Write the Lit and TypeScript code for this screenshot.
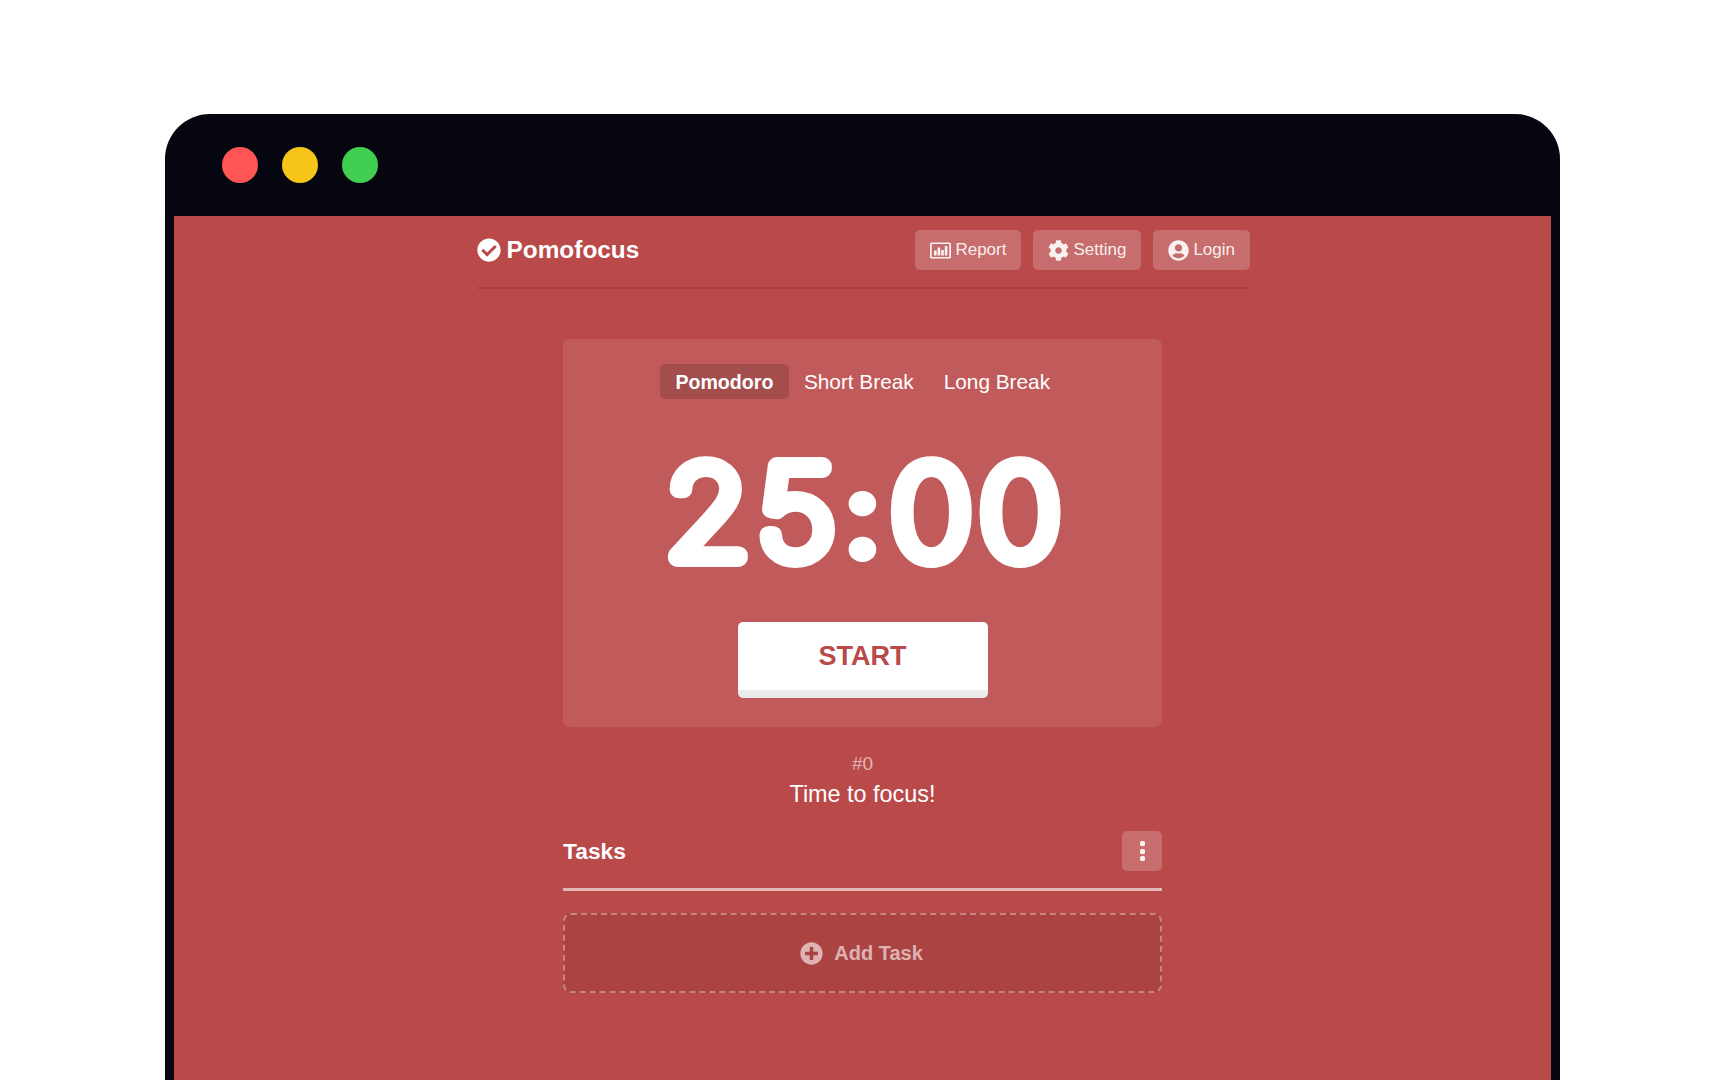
import { LitElement, html, css } from 'lit';
import { customElement } from 'lit/decorators.js';

const CHECK = 'M504 256c0 136.967-111.033 248-248 248S8 392.967 8 256 119.033 8 256 8s248 111.033 248 248zM227.314 387.314l184-184c6.248-6.248 6.248-16.379 0-22.627l-22.627-22.627c-6.248-6.249-16.379-6.249-22.628 0L216 308.118l-70.059-70.059c-6.248-6.248-16.379-6.248-22.628 0l-22.627 22.627c-6.248 6.248-6.248 16.379 0 22.627l104 104c6.249 6.25 16.379 6.25 22.628.001z';
const COG = 'M487.4 315.7l-42.6-24.6c4.3-23.2 4.3-47 0-70.2l42.6-24.6c4.9-2.8 7.1-8.6 5.5-14-11.1-35.6-30-67.8-54.7-94.6-3.8-4.1-10-5.1-14.8-2.3L380.8 110c-17.9-15.4-38.5-27.3-60.8-35.1V25.8c0-5.6-3.9-10.5-9.4-11.7-36.7-8.2-74.3-7.8-109.2 0-5.5 1.2-9.4 6.1-9.4 11.7V75c-22.2 7.9-42.8 19.8-60.8 35.1L88.7 85.5c-4.9-2.8-11-1.9-14.8 2.3-24.7 26.7-43.6 58.9-54.7 94.6-1.7 5.4.6 11.2 5.5 14L67.3 221c-4.3 23.2-4.3 47 0 70.2l-42.6 24.6c-4.9 2.8-7.1 8.6-5.5 14 11.1 35.6 30 67.8 54.7 94.6 3.8 4.1 10 5.1 14.8 2.3l42.6-24.6c17.9 15.4 38.5 27.3 60.8 35.1v49.2c0 5.6 3.9 10.5 9.4 11.7 36.7 8.2 74.3 7.8 109.2 0 5.5-1.2 9.4-6.1 9.4-11.7v-49.2c22.2-7.9 42.8-19.8 60.8-35.1l42.6 24.6c4.9 2.8 11 1.9 14.8-2.3 24.7-26.7 43.6-58.9 54.7-94.6 1.5-5.5-.7-11.3-5.6-14.1zM256 336c-44.1 0-80-35.9-80-80s35.9-80 80-80 80 35.9 80 80-35.9 80-80 80z';
const USER = 'M248 8C111 8 0 119 0 256s111 248 248 248 248-111 248-248S385 8 248 8zm0 96c48.6 0 88 39.4 88 88s-39.4 88-88 88-88-39.4-88-88 39.4-88 88-88zm0 344c-58.7 0-111.3-26.6-146.5-68.2 18.8-35.4 55.6-59.8 98.5-59.8 2.4 0 4.8.4 7.1 1.1 13 4.2 26.6 6.9 40.9 6.9 14.3 0 28-2.7 40.9-6.9 2.3-.7 4.7-1.1 7.1-1.1 42.9 0 79.7 24.4 98.5 59.8C359.3 421.4 306.7 448 248 448z';
const PLUS = 'M256 8C119 8 8 119 8 256s111 248 248 248 248-111 248-248S393 8 256 8zm144 276c0 6.6-5.4 12-12 12h-92v92c0 6.6-5.4 12-12 12h-56c-6.6 0-12-5.4-12-12v-92h-92c-6.6 0-12-5.4-12-12v-56c0-6.6 5.4-12 12-12h92v-92c0-6.6 5.4-12 12-12h56c6.6 0 12 5.4 12 12v92h92c6.6 0 12 5.4 12 12v56z';

@customElement('app-root')
export class AppRoot extends LitElement {
  static styles = css`
    :host {
      display: block;
      height: 1080px;
      overflow: hidden;
      background: #fff;
      padding: 114px 168px 0 165px;
      box-sizing: border-box;
      font-family: 'Liberation Sans', Arial, sans-serif;
      color: #fff;
    }

    .frame {
      height: 966px;
      padding: 0 9px;
      background: #05060f;
      border-radius: 45px 45px 0 0;
    }

    .titlebar {
      height: 102px;
      display: flex;
      align-items: center;
      gap: 24px;
      padding-left: 48px;
    }

    .dot {
      width: 36px;
      height: 36px;
      border-radius: 50%;
    }
    .red { background: #ff5555; }
    .yellow { background: #f7c517; }
    .green { background: #40cf50; }

    .page {
      height: 864px;
      background: #ba4949;
      display: flex;
      flex-direction: column;
      align-items: center;
    }

    nav {
      width: 773px;
      height: 73px;
      box-sizing: border-box;
      padding-top: 14px;
      margin-left: 1px;
      display: flex;
      justify-content: space-between;
      align-items: flex-start;
      border-bottom: 2px solid rgba(0, 0, 0, 0.1);
    }

    .logo {
      height: 40px;
      display: flex;
      align-items: center;
      gap: 6px;
      font-size: 24.4px;
      font-weight: 700;
    }
    .logo svg {
      width: 24px;
      height: 24px;
      fill: #fff;
    }

    .nav-buttons {
      display: flex;
      gap: 12px;
    }

    .nav-btn {
      height: 40px;
      display: flex;
      align-items: center;
      gap: 4px;
      padding: 0 14.5px 0 15.5px;
      border-radius: 5px;
      background: rgba(255, 255, 255, 0.2);
      font-size: 17px;
      color: rgba(255, 255, 255, 0.9);
    }
    .nav-btn svg {
      width: 21px;
      height: 21px;
      fill: rgba(255, 255, 255, 0.9);
    }

    .card {
      width: 599px;
      height: 388px;
      box-sizing: border-box;
      margin-top: 50px;
      padding-top: 25px;
      background: rgba(255, 255, 255, 0.1);
      border-radius: 7px;
      display: flex;
      flex-direction: column;
      align-items: center;
    }

    .tabs {
      display: flex;
      align-items: center;
      height: 35px;
    }
    .tab {
      height: 35px;
      line-height: 35px;
      padding: 0 15px;
      font-size: 20.8px;
    }
    .tab.active {
      padding: 0 15.5px;
      font-size: 19.6px;
      font-weight: 700;
      border-radius: 5px;
      background: rgba(0, 0, 0, 0.15);
      line-height: 37px;
    }

    .time {
      width: 599px;
      height: 223px;
      display: block;
    }
    .time text {
      font-family: Inter, 'Liberation Sans', sans-serif;
      font-size: 126px;
      font-weight: 100;
      text-anchor: middle;
      fill: #fff;
      stroke: #fff;
      stroke-width: 18px;
      stroke-linejoin: round;
      stroke-linecap: round;
    }
    .time .colon {
      font-weight: 700;
      stroke-width: 4px;
    }

    .start {
      width: 250px;
      height: 76px;
      box-sizing: border-box;
      border-bottom: 8px solid #ebebeb;
      border-radius: 5px;
      background: #fff;
      color: #ba4949;
      font-size: 27px;
      font-weight: 700;
      padding-top: 1px;
      display: flex;
      align-items: center;
      justify-content: center;
    }

    .status {
      margin-top: 26px;
      text-align: center;
    }
    .count {
      height: 22px;
      line-height: 22px;
      font-size: 19px;
      color: rgba(255, 255, 255, 0.6);
    }
    .message {
      margin-top: 4px;
      height: 28px;
      line-height: 30px;
      font-size: 23.4px;
    }

    .tasks {
      width: 599px;
      margin-top: 24px;
    }
    .tasks-head {
      height: 40px;
      padding-bottom: 17px;
      display: flex;
      align-items: center;
      justify-content: space-between;
      border-bottom: 3px solid rgba(255, 255, 255, 0.6);
      font-size: 22.8px;
      font-weight: 700;
    }
    .menu {
      width: 40px;
      height: 40px;
      border-radius: 5px;
      background: rgba(255, 255, 255, 0.2);
      display: flex;
      flex-direction: column;
      align-items: center;
      justify-content: center;
      gap: 2.5px;
    }
    .menu span {
      width: 5px;
      height: 5px;
      border-radius: 1.5px;
      background: rgba(255, 255, 255, 0.9);
    }

    .add {
      height: 80px;
      box-sizing: border-box;
      margin-top: 22px;
      border: 2px dashed rgba(255, 255, 255, 0.35);
      border-radius: 8px;
      background: rgba(0, 0, 0, 0.08);
      display: flex;
      align-items: center;
      justify-content: center;
      gap: 11px;
      font-size: 20px;
      font-weight: 700;
      color: rgba(255, 255, 255, 0.6);
    }
    .add svg {
      width: 23px;
      height: 23px;
      margin-left: -2px;
      fill: rgba(255, 255, 255, 0.6);
    }
  `;

  render() {
    return html`
      <div class="frame">
        <div class="titlebar">
          <div class="dot red"></div>
          <div class="dot yellow"></div>
          <div class="dot green"></div>
        </div>
        <div class="page">
          <nav>
            <div class="logo">
              <svg viewBox="0 0 512 512"><path d=${CHECK}></path></svg>
              Pomofocus
            </div>
            <div class="nav-buttons">
              <div class="nav-btn">
                <svg viewBox="0 0 21 21">
                  <path fill-rule="evenodd" d="M1.5 2.5h18a1.5 1.5 0 0 1 1.5 1.5v13a1.5 1.5 0 0 1-1.5 1.5h-18A1.5 1.5 0 0 1 0 17V4a1.500 1.500 0 0 1 1.500-1.500zm.2 1.600v12.800h17.600V4.100z"></path>
                  <rect x="4" y="10.500" width="2.600" height="5"></rect>
                  <rect x="7.600" y="7.500" width="2.600" height="8"></rect>
                  <rect x="11.200" y="10" width="2.600" height="5.500"></rect>
                  <rect x="14.800" y="6" width="2.600" height="9.500"></rect>
                </svg>
                Report
              </div>
              <div class="nav-btn">
                <svg viewBox="0 0 512 512"><path d=${COG}></path></svg>
                Setting
              </div>
              <div class="nav-btn">
                <svg viewBox="0 0 496 512"><path d=${USER}></path></svg>
                Login
              </div>
            </div>
          </nav>

          <div class="card">
            <div class="tabs">
              <div class="tab active">Pomodoro</div>
              <div class="tab">Short Break</div>
              <div class="tab">Long Break</div>
            </div>
            <svg class="time" viewBox="0 0 599 223">
              <text transform="scale(1.09 1)" y="159"><tspan x="132.600">2</tspan><tspan x="214.200">5</tspan><tspan class="colon" x="274.800" y="160">:</tspan><tspan x="337.800" y="159">0</tspan><tspan x="419.300">0</tspan></text>
            </svg>
            <div class="start">START</div>
          </div>

          <div class="status">
            <div class="count">#0</div>
            <div class="message">Time to focus!</div>
          </div>

          <div class="tasks">
            <div class="tasks-head">
              <span>Tasks</span>
              <div class="menu"><span></span><span></span><span></span></div>
            </div>
            <div class="add">
              <svg viewBox="0 0 512 512"><path d=${PLUS}></path></svg>
              Add Task
            </div>
          </div>
        </div>
      </div>
    `;
  }
}
